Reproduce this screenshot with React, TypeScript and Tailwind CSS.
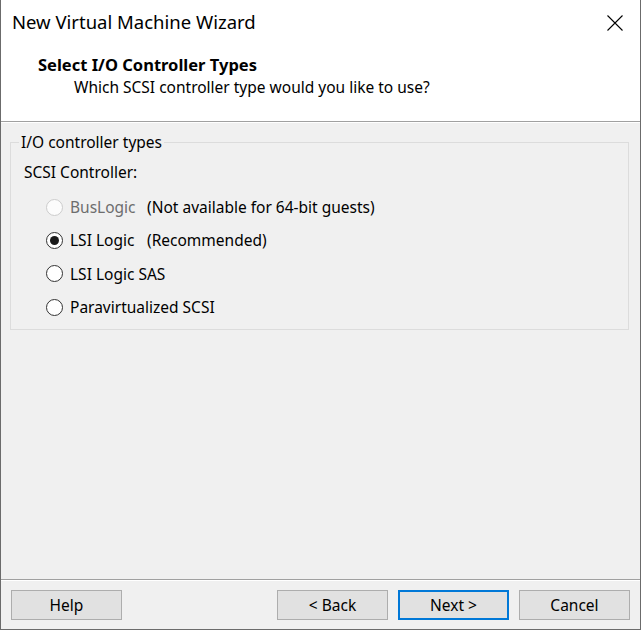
export default function App() {
  const font = "font-['Segoe_UI','Noto_Sans',sans-serif]";
  return (
    <div className={`w-[641px] h-[630px] bg-[#f0f0f0] flex flex-col border-l border-r border-b border-[#6b6b6b] ${font} text-[15.5px] text-black overflow-hidden`}>
      <div className="h-[122px] shrink-0 bg-white border-b border-[#a0a0a0] flex flex-col">
        <div className="flex items-start justify-between pl-[11px] pr-[17px] pt-[9px]">
          <div className="text-[18.5px] leading-[26px]">New Virtual Machine Wizard</div>
          <svg width="16" height="16" viewBox="0 0 16 16" className="mt-[6px]">
            <path d="M0.5 0.5 L15.5 15.5 M15.5 0.5 L0.5 15.5" stroke="#000" strokeWidth="1.1" fill="none" />
          </svg>
        </div>
        <div className="pl-[37px] pt-[20px] font-bold text-[16.5px] leading-[20px]">Select I/O Controller Types</div>
        <div className="pl-[73px] leading-[20px] pt-[2px]">Which SCSI controller type would you like to use?</div>
      </div>
      <div className="h-px bg-white shrink-0" />
      <div className="flex-1 pl-[9px] pr-[11px] pt-[9px]">
        <fieldset className="border border-[#dcdcdc] pl-[13px] pr-2 h-[198px]">
          <legend className="ml-[-5px] px-[2px] leading-[20px]">I/O controller types</legend>
          <div className="leading-[20px] pt-[10px]">SCSI Controller:</div>
          <div className="flex flex-col pl-[22px] pt-[15px] gap-[13.4px]">
            <Radio label="BusLogic" note="(Not available for 64-bit guests)" disabled />
            <Radio label="LSI Logic" note="(Recommended)" checked />
            <Radio label="LSI Logic SAS" />
            <Radio label="Paravirtualized SCSI" />
          </div>
        </fieldset>
      </div>
      <div className="h-[50px] shrink-0 border-t border-[#a0a0a0] flex flex-col">
        <div className="h-px bg-white" />
        <div className="flex-1 flex items-center pl-[10px] pr-[10px]">
          <Btn>Help</Btn>
          <div className="flex-1" />
          <div className="flex gap-[10px]">
            <Btn>&lt; Back</Btn>
            <Btn primary>Next &gt;</Btn>
            <Btn>Cancel</Btn>
          </div>
        </div>
      </div>
    </div>
  );
}

function Radio({ label, note, checked, disabled }: { label: string; note?: string; checked?: boolean; disabled?: boolean }) {
  return (
    <div className="flex items-center h-[20px]">
      <div
        className={`w-[17px] h-[17px] rounded-full border flex items-center justify-center shrink-0 ${
          disabled ? "border-[#cccccc] bg-[#fcfcfc]" : "border-[#333333] bg-white"
        }`}
      >
        {checked && <div className="w-[9px] h-[9px] rounded-full bg-[#1a1a1a]" />}
      </div>
      <span className={`ml-[7px] leading-[20px] ${note ? "w-[77px]" : ""} ${disabled ? "text-[#6d6d6d]" : ""}`}>{label}</span>
      {note && <span className="leading-[20px]">{note}</span>}
    </div>
  );
}

function Btn({ children, primary }: { children: React.ReactNode; primary?: boolean }) {
  return (
    <button
      className={`w-[111px] h-[30px] bg-[#e1e1e1] flex items-center justify-center leading-[20px] ${
        primary ? "border-2 border-[#0078d7]" : "border border-[#adadad]"
      }`}
    >
      {children}
    </button>
  );
}
